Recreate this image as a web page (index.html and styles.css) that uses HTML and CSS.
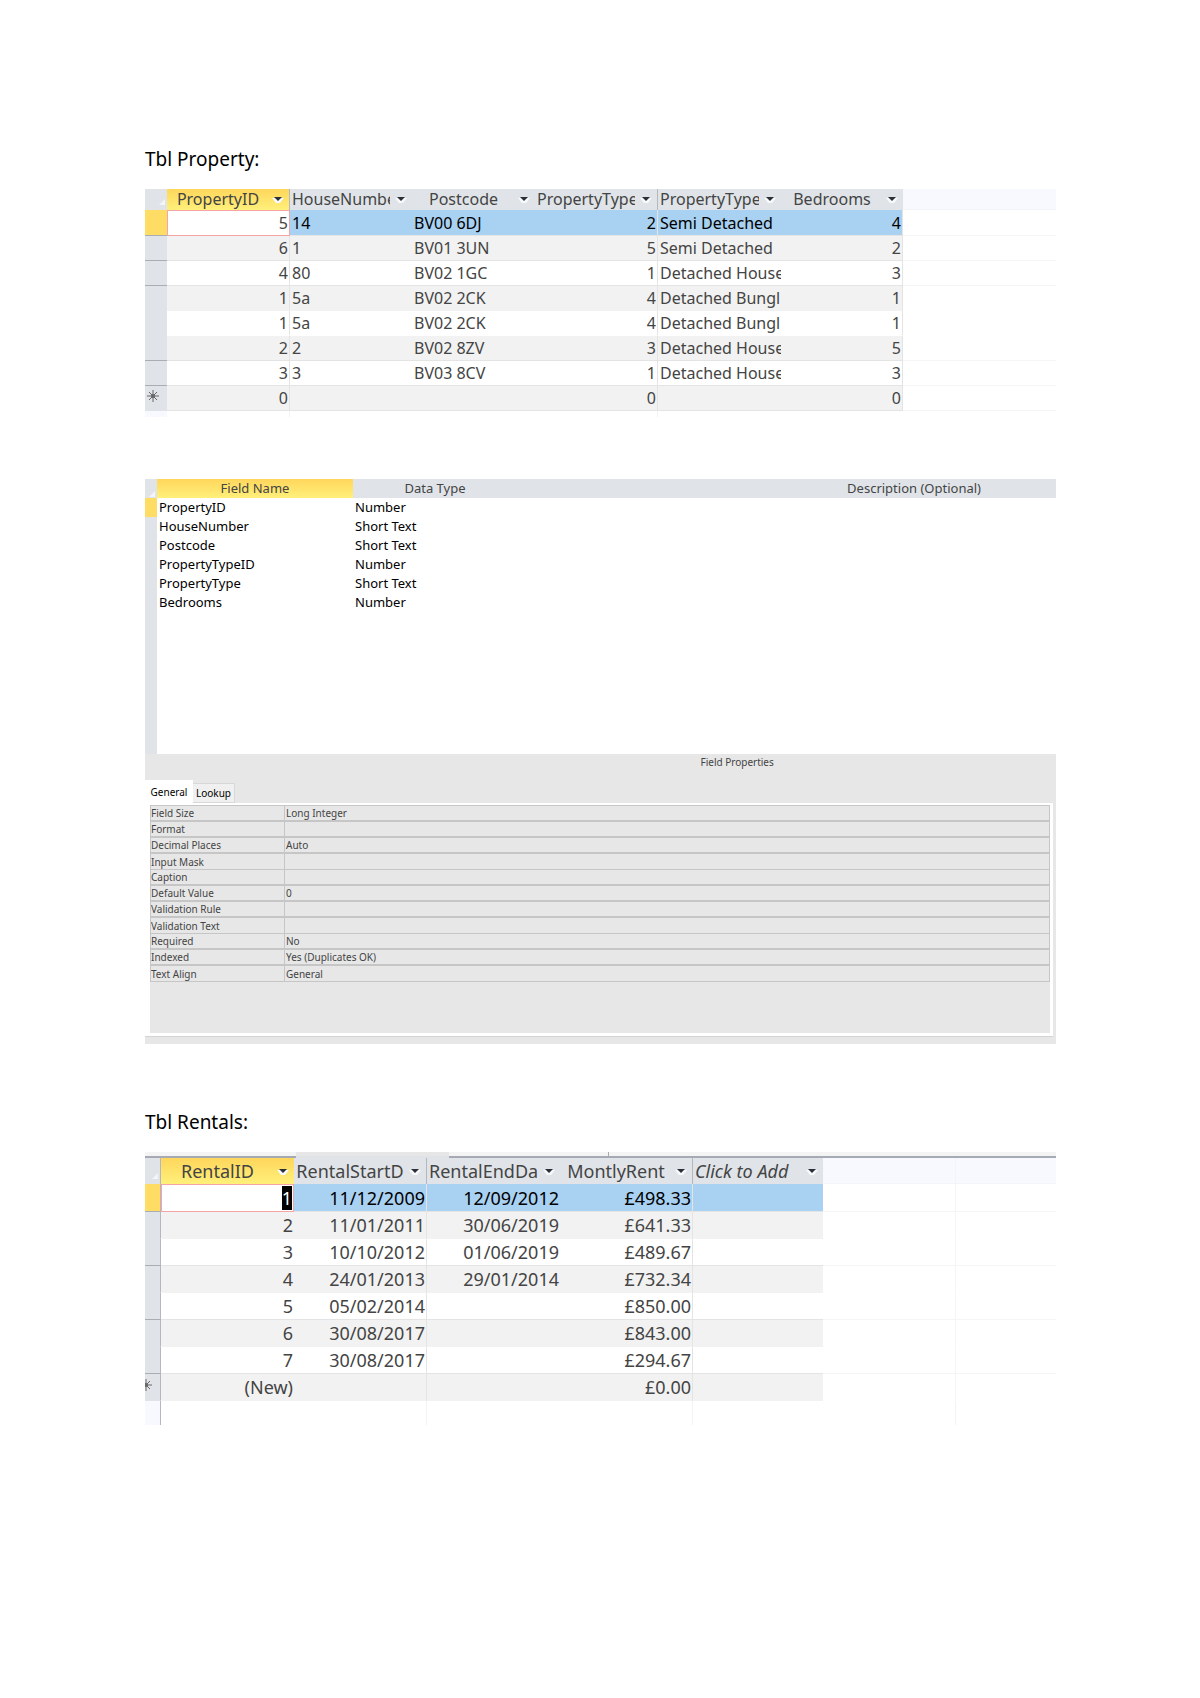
FILE: index.html
```html
<!DOCTYPE html>
<html lang="en">
<head>
    <meta charset="UTF-8">
    <meta name="viewport" content="width=device-width, initial-scale=1.0">
    <title>Property and Rentals tables</title>
    <link rel="stylesheet" href="styles.css">
</head>
<body>
    <svg class="defs" width="0" height="0" aria-hidden="true">
        <symbol id="arrow" viewBox="0 0 12 8">
            <path d="M0 3H12L8 8H4Z" fill="#f8f9fb"/>
            <path d="M2 2H10L6 6Z" fill="#2b2f38"/>
        </symbol>
        <symbol id="star" viewBox="0 0 12 12">
            <path d="M6 0V12M0 6H12M2 2L10 10M10 2L2 10" stroke="#666" stroke-width="1" fill="none"/>
            <circle cx="6" cy="6" r="2" fill="#666"/>
        </symbol>
        <symbol id="corner" viewBox="0 0 6 6">
            <path d="M6 0V6H0Z" fill="#f3f5f8"/>
        </symbol>
    </svg>

    <main class="page">
        <h2>Tbl Property:</h2>
        <table class="sheet property">
            <colgroup>
                <col class="mark"><col class="wide"><col class="mid"><col class="wide"><col class="wide"><col class="wide"><col class="mid"><col>
            </colgroup>
            <thead>
                <tr>
                    <th class="marker"><svg class="corner"><use href="#corner"/></svg></th>
                    <th class="active line"><div class="head"><span>PropertyID</span><button aria-label="Filter PropertyID"><svg><use href="#arrow"/></svg></button></div></th>
                    <th><div class="head"><span>HouseNumber</span><button aria-label="Filter HouseNumber"><svg><use href="#arrow"/></svg></button></div></th>
                    <th><div class="head"><span>Postcode</span><button aria-label="Filter Postcode"><svg><use href="#arrow"/></svg></button></div></th>
                    <th class="line"><div class="head"><span>PropertyTypeID</span><button aria-label="Filter PropertyTypeID"><svg><use href="#arrow"/></svg></button></div></th>
                    <th><div class="head"><span>PropertyType</span><button aria-label="Filter PropertyType"><svg><use href="#arrow"/></svg></button></div></th>
                    <th><div class="head"><span>Bedrooms</span><button aria-label="Filter Bedrooms"><svg><use href="#arrow"/></svg></button></div></th>
                    <td class="empty"></td>
                </tr>
            </thead>
            <tbody>
                <tr class="selected"><td class="marker"></td><td class="num line current">5</td><td>14</td><td>BV00 6DJ</td><td class="num line">2</td><td>Semi Detached</td><td class="num line">4</td><td class="empty"></td></tr>
                <tr><td class="marker"></td><td class="num line">6</td><td>1</td><td>BV01 3UN</td><td class="num line">5</td><td>Semi Detached</td><td class="num line">2</td><td class="empty"></td></tr>
                <tr><td class="marker"></td><td class="num line">4</td><td>80</td><td>BV02 1GC</td><td class="num line">1</td><td>Detached House</td><td class="num line">3</td><td class="empty"></td></tr>
                <tr class="plain"><td class="marker"></td><td class="num line">1</td><td>5a</td><td>BV02 2CK</td><td class="num line">4</td><td>Detached Bungl</td><td class="num line">1</td><td class="empty"></td></tr>
                <tr class="plain"><td class="marker"></td><td class="num line">1</td><td>5a</td><td>BV02 2CK</td><td class="num line">4</td><td>Detached Bungl</td><td class="num line">1</td><td class="empty"></td></tr>
                <tr><td class="marker"></td><td class="num line">2</td><td>2</td><td>BV02 8ZV</td><td class="num line">3</td><td>Detached House</td><td class="num line">5</td><td class="empty"></td></tr>
                <tr><td class="marker"></td><td class="num line">3</td><td>3</td><td>BV03 8CV</td><td class="num line">1</td><td>Detached House</td><td class="num line">3</td><td class="empty"></td></tr>
                <tr class="new"><td class="marker"><svg class="star"><use href="#star"/></svg></td><td class="num line">0</td><td></td><td></td><td class="num line">0</td><td></td><td class="num line">0</td><td class="empty"></td></tr>
            </tbody>
            <tfoot>
                <tr><td class="marker"></td><td class="line"></td><td></td><td></td><td class="line"></td><td></td><td></td><td></td></tr>
            </tfoot>
        </table>

        <section class="design">
            <div class="fields">
                <table>
                    <colgroup>
                        <col class="mark"><col class="name"><col class="type"><col>
                    </colgroup>
                    <thead>
                        <tr><th class="marker"><svg class="corner"><use href="#corner"/></svg></th><th class="active">Field Name</th><th>Data Type</th><th>Description (Optional)</th></tr>
                    </thead>
                    <tbody>
                        <tr class="selected"><td class="marker"></td><td>PropertyID</td><td>Number</td><td></td></tr>
                        <tr><td class="marker"></td><td>HouseNumber</td><td>Short Text</td><td></td></tr>
                        <tr><td class="marker"></td><td>Postcode</td><td>Short Text</td><td></td></tr>
                        <tr><td class="marker"></td><td>PropertyTypeID</td><td>Number</td><td></td></tr>
                        <tr><td class="marker"></td><td>PropertyType</td><td>Short Text</td><td></td></tr>
                        <tr><td class="marker"></td><td>Bedrooms</td><td>Number</td><td></td></tr>
                        <tr class="rest"><td class="marker"></td><td></td><td></td><td></td></tr>
                    </tbody>
                </table>
            </div>
            <div class="properties">
                <div class="title"><span>Field Properties</span></div>
                <div class="tabs">
                    <button class="tab open">General</button>
                    <button class="tab">Lookup</button>
                </div>
                <div class="sheet-area">
                    <table>
                        <colgroup><col class="label"><col></colgroup>
                        <tbody>
                            <tr><th>Field Size</th><td>Long Integer</td></tr>
                            <tr><th>Format</th><td></td></tr>
                            <tr><th>Decimal Places</th><td>Auto</td></tr>
                            <tr><th>Input Mask</th><td></td></tr>
                            <tr><th>Caption</th><td></td></tr>
                            <tr><th>Default Value</th><td>0</td></tr>
                            <tr><th>Validation Rule</th><td></td></tr>
                            <tr><th>Validation Text</th><td></td></tr>
                            <tr><th>Required</th><td>No</td></tr>
                            <tr><th>Indexed</th><td>Yes (Duplicates OK)</td></tr>
                            <tr><th>Text Align</th><td>General</td></tr>
                        </tbody>
                    </table>
                </div>
            </div>
        </section>

        <h2>Tbl Rentals:</h2>
        <div class="ribbon"><i class="start"></i><i class="gap"></i><i class="middle"></i><i class="end"></i></div>
        <table class="sheet rentals">
            <colgroup>
                <col class="mark"><col class="wide"><col class="wide"><col class="wide"><col class="wide"><col class="add"><col class="wide"><col>
            </colgroup>
            <thead>
                <tr>
                    <th class="marker"><svg class="corner"><use href="#corner"/></svg></th>
                    <th class="active"><div class="head"><span>RentalID</span><button aria-label="Filter RentalID"><svg><use href="#arrow"/></svg></button></div></th>
                    <th class="line"><div class="head"><span>RentalStartD</span><button aria-label="Filter RentalStartD"><svg><use href="#arrow"/></svg></button></div></th>
                    <th><div class="head"><span>RentalEndDa</span><button aria-label="Filter RentalEndDa"><svg><use href="#arrow"/></svg></button></div></th>
                    <th class="line"><div class="head"><span>MontlyRent</span><button aria-label="Filter MontlyRent"><svg><use href="#arrow"/></svg></button></div></th>
                    <th class="click"><div class="head"><span>Click to Add</span><button aria-label="Add a field"><svg><use href="#arrow"/></svg></button></div></th>
                    <td class="empty line"></td>
                    <td class="empty"></td>
                </tr>
            </thead>
            <tbody>
                <tr class="selected"><td class="marker"></td><td class="num current"><mark>1</mark></td><td class="num line">11/12/2009</td><td class="num">12/09/2012</td><td class="num line">£498.33</td><td></td><td class="empty line"></td><td class="empty"></td></tr>
                <tr class="plain"><td class="marker"></td><td class="num">2</td><td class="num line">11/01/2011</td><td class="num">30/06/2019</td><td class="num line">£641.33</td><td></td><td class="empty line"></td><td class="empty"></td></tr>
                <tr><td class="marker"></td><td class="num">3</td><td class="num line">10/10/2012</td><td class="num">01/06/2019</td><td class="num line">£489.67</td><td></td><td class="empty line"></td><td class="empty"></td></tr>
                <tr class="plain"><td class="marker"></td><td class="num">4</td><td class="num line">24/01/2013</td><td class="num">29/01/2014</td><td class="num line">£732.34</td><td></td><td class="empty line"></td><td class="empty"></td></tr>
                <tr><td class="marker"></td><td class="num">5</td><td class="num line">05/02/2014</td><td class="num"></td><td class="num line">£850.00</td><td></td><td class="empty line"></td><td class="empty"></td></tr>
                <tr class="plain"><td class="marker"></td><td class="num">6</td><td class="num line">30/08/2017</td><td class="num"></td><td class="num line">£843.00</td><td></td><td class="empty line"></td><td class="empty"></td></tr>
                <tr><td class="marker"></td><td class="num">7</td><td class="num line">30/08/2017</td><td class="num"></td><td class="num line">£294.67</td><td></td><td class="empty line"></td><td class="empty"></td></tr>
                <tr class="plain new"><td class="marker"><svg class="star"><use href="#star"/></svg></td><td class="num">(New)</td><td class="num line"></td><td class="num"></td><td class="num line">£0.00</td><td></td><td class="empty line"></td><td class="empty"></td></tr>
            </tbody>
            <tfoot>
                <tr><td class="marker"></td><td></td><td class="line"></td><td></td><td class="line"></td><td></td><td class="line"></td><td></td></tr>
            </tfoot>
        </table>
    </main>
</body>
</html>
```
FILE: styles.css
```css
body {
    margin: 0;
    background-color: #fff;
    color: #444;
    font-family: "Noto Sans", "Open Sans", sans-serif;
}
.defs {
    display: block;
}
.page {
    padding: 145px 144px 64px 145px;
}
h2 {
    margin: 0 0 16px;
    color: #000;
    font-size: 19px;
    font-weight: normal;
    line-height: 28px;
}
table {
    width: 100%;
    table-layout: fixed;
    border-collapse: separate;
    border-spacing: 0;
}
th, td {
    padding: 0;
    font-weight: normal;
    text-align: left;
    white-space: nowrap;
    overflow: hidden;
    box-sizing: border-box;
}
button {
    margin: 0;
    padding: 0;
    border: none;
    background: none;
    color: inherit;
    font: inherit;
}
thead th {
    background-color: #e0e4e9;
}
thead th.active {
    background: linear-gradient(#ffd65c, #fff07a);
}
.corner {
    display: block;
    width: 6px;
    height: 6px;
    margin: 10px 2px 0 auto;
}
.star {
    display: block;
    width: 12px;
    height: 12px;
}

/* Datasheets */
.sheet .head {
    display: flex;
    align-items: center;
}
.sheet .head span {
    flex: 1;
    padding-left: 2px;
    overflow: hidden;
    text-align: center;
}
.sheet .head button {
    flex: none;
    width: 22px;
    display: flex;
    justify-content: center;
}
.sheet .head svg {
    width: 12px;
    height: 8px;
}
.sheet td {
    padding: 0 1px 0 2px;
    border-bottom: 1px solid #e4e4e4;
}
.sheet tbody tr:nth-child(even) td {
    background-color: #f2f2f2;
}
.sheet tbody .selected td {
    background-color: #a9d1f2;
    color: #000;
}
.sheet .num {
    text-align: right;
}
.sheet .line {
    border-right: 1px solid #e4e4e4;
}
.sheet th.line {
    border-right-color: #b4b8be;
}
.sheet tbody .selected .current {
    border: 1px solid #f5a5a5;
    background-color: #fff;
    color: #444;
}
.sheet tbody tr td.marker {
    padding: 0;
    background-color: #e0e4e9;
    border-bottom-color: #a9adb4;
}
.sheet tbody .selected td.marker {
    background-color: #ffdc64;
}
.sheet tbody tr td.empty {
    background-color: #fff;
    border-color: #f5f5f5;
}
.sheet thead td.empty {
    background-color: #f8f9ff;
    border-color: #f3f4f8;
}
.sheet tfoot td {
    border-bottom: none;
}
.sheet tfoot td.line {
    border-color: #f3f3f3;
}
.sheet tfoot .marker {
    background-color: #f8f9ff;
}

.property {
    margin-bottom: 62px;
    font-size: 16px;
    line-height: 24px;
}
.property .mark {
    width: 22px;
}
.property .wide {
    width: 123px;
}
.property .mid {
    width: 122px;
}
.property thead {
    line-height: 20px;
}
.property thead tr {
    height: 21px;
}
.property thead th {
    vertical-align: top;
}
.property tbody td {
    height: 25px;
}
.property .plain td, .property .plain td.marker, .property .plain td.empty, .property .new td.marker {
    border-bottom-color: transparent;
}
.property .star {
    margin: 0 0 4px 2px;
}
.property tfoot td {
    height: 6px;
}

.ribbon {
    display: flex;
    height: 6px;
}
.ribbon i {
    box-sizing: border-box;
    background-color: #f4f4f4;
    border-bottom: 2px solid #a6abb3;
}
.ribbon .start {
    width: 151px;
}
.ribbon .gap {
    width: 153px;
    background-color: #e6e6e6;
    border-bottom-color: #e0e2e6;
}
.ribbon .middle {
    width: 160px;
    border-right: 1px solid #a6abb3;
}
.ribbon .end {
    flex: 1;
}
.rentals {
    font-size: 18px;
    line-height: 26px;
}
.rentals .mark {
    width: 16px;
}
.rentals .wide {
    width: 133px;
}
.rentals .add {
    width: 130px;
}
.rentals thead {
    line-height: 26px;
}
.rentals .click span {
    font-style: italic;
    text-align: left;
}
.rentals tbody td {
    height: 27px;
}
.rentals .marker {
    border-right: 1px solid #b4b8be;
}
.rentals .plain td, .rentals .plain td.marker, .rentals .plain td.empty {
    border-bottom-color: transparent;
}
.rentals .star {
    margin: 0 0 4px -5px;
}
.rentals mark {
    display: inline-block;
    background-color: #000;
    color: #fff;
    line-height: 24px;
}
.rentals tfoot td {
    height: 24px;
}

/* Design view */
.design {
    margin-bottom: 64px;
    overflow: hidden;
}
/* the description column runs on past the right edge */
.fields table {
    width: 128%;
    color: #000;
    font-size: 13px;
    line-height: 19px;
}
.fields .mark {
    width: 12px;
}
.fields .name {
    width: 196px;
}
.fields .type {
    width: 164px;
}
.fields thead {
    color: #444;
}
.fields th {
    text-align: center;
}
.fields td {
    height: 19px;
    padding-left: 2px;
}
.fields td.marker {
    background-color: #e0e4e9;
}
.fields .selected td.marker {
    background-color: #ffdc64;
}
.fields .rest td {
    height: 142px;
}
.properties {
    padding-bottom: 8px;
    background-color: #e7e7e7;
    font-size: 10px;
}
.properties .title {
    width: 130%;
    height: 26px;
    line-height: 16px;
    text-align: center;
}
.tabs {
    display: flex;
    align-items: flex-end;
}
.tab {
    width: 42px;
    height: 20px;
    border: 1px solid #d8d8d8;
    border-left: none;
    background-color: #f0f0f0;
    color: #000;
    text-align: center;
}
.tab.open {
    width: 48px;
    height: 23px;
    border: none;
    background-color: #fff;
}
.sheet-area {
    margin-right: 3px;
    border: solid #fff;
    border-width: 2px 3px 3px 5px;
    min-height: 228px;
    box-shadow: 0 1px 0 #d4d4d4;
}
.sheet-area table {
    border: solid #c6c6c6;
    border-width: 1px 1px 0 1px;
    line-height: 14px;
}
.sheet-area .label {
    width: 133px;
}
.sheet-area th, .sheet-area td {
    height: 16px;
    border-bottom: 2px solid #c6c6c6;
}
.sheet-area tr:nth-child(4n) th, .sheet-area tr:nth-child(4n) td, .sheet-area tr:last-child th, .sheet-area tr:last-child td {
    border-bottom-width: 1px;
}
.sheet-area td {
    padding-left: 1px;
    border-left: 1px solid #c6c6c6;
}
```
